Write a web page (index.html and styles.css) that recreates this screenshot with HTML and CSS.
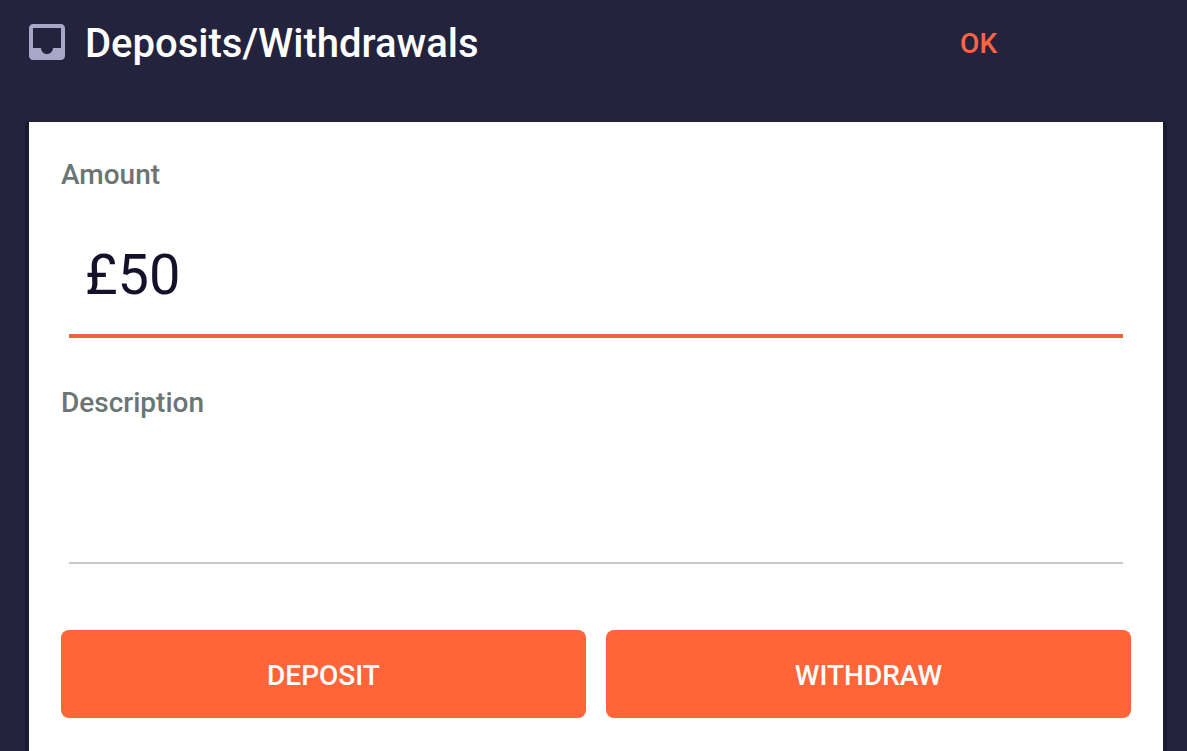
FILE: index.html
```html
<!DOCTYPE html>
<html lang="en">
<head>
    <meta charset="UTF-8">
    <meta name="viewport" content="width=device-width, initial-scale=1.0">
    <title>Deposits/Withdrawals</title>
    <link rel="stylesheet" href="styles.css">
</head>
<body>
    <header class="header">
        <svg class="header-icon" viewBox="3 3 18 18" aria-hidden="true">
            <path d="M19 3H4.99C3.88 3 3.01 3.89 3.01 5L3 19c0 1.1.88 2 1.99 2H19c1.1 0 2-.9 2-2V5c0-1.11-.9-2-2-2zm0 12h-4c0 1.66-1.35 3-3 3s-3-1.34-3-3H4.99V5H19v10z"/>
        </svg>
        <h1>Deposits/Withdrawals</h1>
        <button type="button" class="ok-button">OK</button>
    </header>
    <main class="card">
        <form>
            <div class="field">
                <label for="amount">Amount</label>
                <input type="text" id="amount" class="amount" value="£50">
            </div>
            <div class="field">
                <label for="description">Description</label>
                <input type="text" id="description">
            </div>
            <div class="actions">
                <button type="button">DEPOSIT</button>
                <button type="button">WITHDRAW</button>
            </div>
        </form>
    </main>
</body>
</html>
```
FILE: styles.css
```css
* {
    box-sizing: border-box;
}
body {
    display: flex;
    flex-direction: column;
    min-height: 100vh;
    margin: 0;
    background-color: #23233d;
    font-family: Roboto, sans-serif;
}
button, input {
    font-family: inherit;
}
.header {
    display: flex;
    align-items: center;
    padding: 20px 16% 54px 29px;
}
.header-icon {
    width: 36px;
    height: 36px;
    margin-bottom: 4px;
    fill: #a9a6c8;
}
.header h1 {
    margin: 0 0 0 20px;
    color: #fff;
    font-size: 40px;
    font-weight: 500;
    line-height: 48px;
}
.ok-button {
    margin-left: auto;
    padding: 0;
    border: none;
    background: none;
    color: #ff6541;
    font-size: 28px;
    font-weight: 500;
    line-height: 48px;
    cursor: pointer;
}
.card {
    flex: 1;
    margin: 0 24px 0 29px;
    padding: 37px 32px 33px;
    background-color: #fff;
    box-shadow: 0 4px 0 4px #1b1b2e;
}
.field {
    height: 228px;
}
.field label {
    display: block;
    color: #6b7573;
    font-size: 28px;
    font-weight: 500;
    line-height: 32px;
}
.field input {
    display: block;
    width: calc(100% - 16px);
    height: 145px;
    margin: 0 8px;
    padding: 24px 16px 0;
    border: none;
    border-bottom: 2px solid #c8c8c8;
    border-radius: 0;
    outline: none;
    background: none;
    color: #14112a;
    font-size: 56px;
}
.field .amount {
    height: 147px;
    border-bottom: 4px solid #ef633f;
}
.actions {
    display: grid;
    grid-template-columns: 1fr 1fr;
    gap: 20px;
    margin-top: 15px;
}
.actions button {
    height: 88px;
    padding: 2px 0 0;
    border: none;
    border-radius: 8px;
    background-color: #ff6539;
    color: #fff;
    font-size: 28px;
    font-weight: 500;
    cursor: pointer;
}
```
